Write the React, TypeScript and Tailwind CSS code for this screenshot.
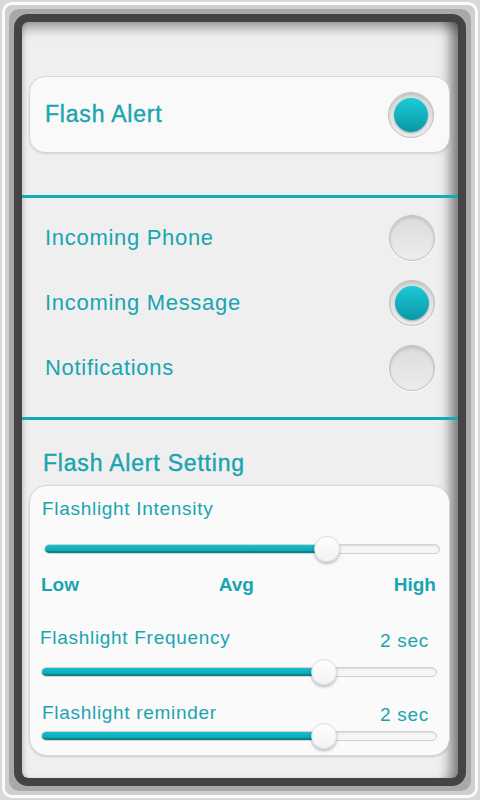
import React from 'react';

function Radio({ on }: { on: boolean }) {
  return (
    <div className="w-[46px] h-[46px] rounded-full border border-[#bdbdbd] bg-gradient-to-b from-[#dcdcdc] to-[#ececec] shadow-[inset_0_2px_3px_rgba(0,0,0,0.12),0_1px_0_rgba(255,255,255,0.9)] flex items-center justify-center shrink-0">
      {on && (
        <div className="w-[34px] h-[34px] rounded-full bg-gradient-to-b from-[#1ccbd7] to-[#0a98a6] shadow-[0_1px_2px_rgba(0,0,0,0.3)]" />
      )}
    </div>
  );
}

function Slider({ pct }: { pct: number }) {
  return (
    <div className="relative h-[26px] flex items-center">
      <div className="h-[10px] w-full rounded-full bg-[#f6f6f6] border border-[#d2d2d2] shadow-[inset_0_1px_2px_rgba(0,0,0,0.12)] overflow-hidden">
        <div
          className="h-full rounded-l-full bg-gradient-to-b from-[#14c0cd] to-[#0ea5b2] border-b-[2px] border-[#0a8590]"
          style={{ width: pct + '%' }}
        />
      </div>
      <div
        className="absolute top-0 w-[26px] h-[26px] rounded-full bg-gradient-to-b from-white to-[#f2f2f2] border border-[#dcdcdc] shadow-[0_2px_3px_rgba(0,0,0,0.25)]"
        style={{ left: `calc(${pct}% - 13px)` }}
      />
    </div>
  );
}

export default function App() {
  const font = "font-['Liberation_Sans',Arial,sans-serif]";
  return (
    <div className={`w-[480px] h-[800px] bg-[#d9d9d9] p-[2px] ${font}`}>
      <div className="h-full rounded-[10px] border-[3px] border-[#fbfbfb] bg-[#cfcfcf] p-[4px]">
        <div className="h-full rounded-[10px] bg-[#a9a9a9] p-[5px]">
          <div className="h-full rounded-[14px] border-[8px] border-[#444] bg-[#444] overflow-hidden">
            <div className="h-full rounded-[6px] bg-[#efefef] shadow-[inset_0_12px_12px_-6px_rgba(0,0,0,0.35),inset_-16px_0_12px_-8px_rgba(0,0,0,0.45),inset_4px_0_4px_-2px_rgba(0,0,0,0.12)] flex flex-col text-[#19a5b0]">
              {/* Flash Alert card */}
              <div className="pt-[54px] pl-[7px] pr-[8px]">
                <div className="h-[77px] rounded-[16px] bg-[#f9f9f9] border border-[#d6d6d6] shadow-[0_1px_2px_rgba(0,0,0,0.12)] flex items-center justify-between pl-[15px] pr-[15px]">
                  <span className="text-[23px] tracking-[0.8px] [-webkit-text-stroke:0.4px_#19a5b0]">Flash Alert</span>
                  <Radio on />
                </div>
              </div>

              <div className="mt-[42px] h-[3px] bg-[#14a9b5]" />

              <div className="pt-[7px] pl-[23px] pr-[23px] flex flex-col">
                {[
                  ['Incoming Phone', false],
                  ['Incoming Message', true],
                  ['Notifications', false],
                ].map(([label, on]) => (
                  <div key={label as string} className="h-[65px] flex items-center justify-between">
                    <span className="text-[22px] tracking-[0.7px]">{label as string}</span>
                    <Radio on={on as boolean} />
                  </div>
                ))}
              </div>

              <div className="mt-[17px] h-[3px] bg-[#14a9b5]" />

              <div className="mt-[29px] pl-[21px] h-[28px] leading-[28px] text-[23px] tracking-[0.8px] [-webkit-text-stroke:0.4px_#19a5b0]">
                Flash Alert Setting
              </div>

              <div className="mt-[8px] ml-[7px] mr-[8px] h-[271px] rounded-[18px] bg-[#fafafa] border border-[#d6d6d6] shadow-[0_1px_2px_rgba(0,0,0,0.15)] flex flex-col">
                <div className="pt-[11px] pl-[12px] h-[35px] leading-[24px] text-[19px] tracking-[0.7px]">Flashlight Intensity</div>
                <div className="mt-[15px] ml-[14px] mr-[9px]">
                  <Slider pct={71.5} />
                </div>
                <div className="mt-[11px] pl-[11px] pr-[13px] h-[24px] flex items-center justify-between text-[19px] font-bold">
                  <span>Low</span>
                  <span>Avg</span>
                  <span>High</span>
                </div>
                <div className="mt-[29px] pl-[10px] pr-[20px] h-[24px] flex items-center justify-between text-[19px] tracking-[0.7px]">
                  <span>Flashlight Frequency</span>
                  <span className="pt-[6px]">2 sec</span>
                </div>
                <div className="mt-[9px] ml-[11px] mr-[12px]">
                  <Slider pct={71.5} />
                </div>
                <div className="mt-[18px] pl-[12px] pr-[20px] h-[20px] flex items-center justify-between text-[19px] tracking-[0.7px]">
                  <span>Flashlight reminder</span>
                  <span className="pt-[4px]">2 sec</span>
                </div>
                <div className="mt-[0px] ml-[11px] mr-[12px]">
                  <Slider pct={71.5} />
                </div>
              </div>
            </div>
          </div>
        </div>
      </div>
    </div>
  );
}
